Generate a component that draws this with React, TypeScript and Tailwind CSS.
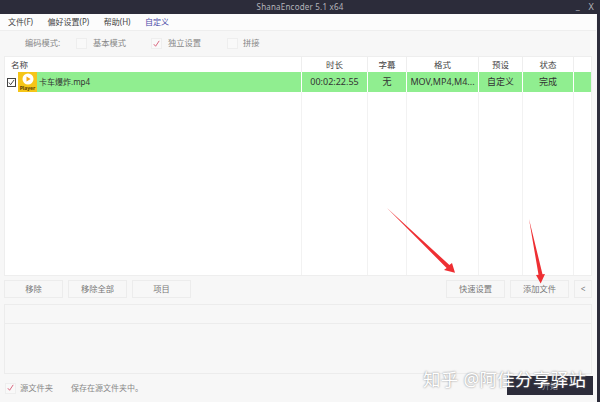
const cjk = { fontFamily: '"Noto Sans", "Noto Sans CJK SC", sans-serif' };

interface Column {
  label: string;
  cell: string;
  width: string;
}

const columns: Column[] = [
  { label: '时长', cell: '00:02:22.55', width: 'w-[66px]' },
  { label: '字幕', cell: '无', width: 'w-[39px]' },
  { label: '格式', cell: 'MOV,MP4,M4...', width: 'w-[72px]' },
  { label: '预设', cell: '自定义', width: 'w-[44px]' },
  { label: '状态', cell: '完成', width: 'w-[51px]' },
  { label: '', cell: '', width: 'w-[18px]' },
];

const Check = ({ checked }: { checked?: boolean }) => (
  <span className="flex h-[11px] w-[11px] items-center justify-center border border-[#eeeeee] bg-[#f9f9f9]">
    {checked && (
      <svg viewBox="0 0 10 10" className="h-[10px] w-[10px]" fill="none" stroke="#d9677f" strokeWidth="1.1">
        <path d="M2 5.2 L4 7.5 L8 1.5" />
      </svg>
    )}
  </span>
);

const Btn = ({ children, width }: { children: React.ReactNode; width: string }) => (
  <button className={`flex h-[18px] items-center justify-center border border-[#ececec] bg-[#f7f7f7] text-[8.25px] text-[#777777] ${width}`}>
    {children}
  </button>
);

const PlayerIcon = () => (
  <div className="flex h-[20px] w-[19px] shrink-0 flex-col items-center bg-[#f5c518]">
    <svg viewBox="0 0 12 12" className="mt-[1px] h-[12px] w-[12px]">
      <circle cx="6" cy="6" r="5.5" fill="#fff" />
      <path d="M4.5 3.4 L8.6 6 L4.5 8.6 Z" fill="#f5a818" />
    </svg>
    <span className="text-[5px] leading-[6px] font-bold text-[#5a4208]">Player</span>
  </div>
);

export default function App() {
  return (
    <div className="relative flex h-[402px] w-[600px] flex-col overflow-hidden bg-[#f7f7f7]" style={cjk}>
      {/* Title bar */}
      <div className="relative flex h-[14px] items-center justify-center bg-[#2c2c3a] text-[8px] tracking-[0.2px] text-[#b5b5bb]">
        ShanaEncoder 5.1 x64
        <span className="absolute top-0 right-[20px] text-[9px] leading-[12px] text-[#b5b5bb]">_</span>
        <span className="absolute top-0 right-[6px] text-[9px] leading-[14px] text-[#b5b5bb]">X</span>
      </div>

      <div className="flex flex-1 flex-col pr-[4px]">
        {/* Menu */}
        <div className="flex h-[17px] items-center gap-[14.6px] border-b border-[#eeeeee] bg-[#fcfcfc] pl-[8px] text-[8px] text-[#444444]">
          <span>文件(F)</span>
          <span>偏好设置(P)</span>
          <span>帮助(H)</span>
          <span className="text-[#4a4aa8]">自定义</span>
        </div>

        {/* Encoding mode */}
        <div className="flex h-[25px] items-center pl-[25px] text-[8.25px] text-[#888888]">
          <span className="w-[37px]">编码模式:</span>
          <span className="ml-[14px]"><Check /></span>
          <span className="ml-[6px] w-[33px]">基本模式</span>
          <span className="ml-[25px]"><Check checked /></span>
          <span className="ml-[6px] w-[33px]">独立设置</span>
          <span className="ml-[26px]"><Check /></span>
          <span className="ml-[5px]">拼接</span>
        </div>

        {/* File table */}
        <div className="ml-[4px] flex h-[220px] w-[588px] flex-col border border-[#eeeeee] bg-white">
          <div className="flex h-[15px] text-[8.5px] text-[#444444]">
            <div className="flex-1 pl-[6px] leading-[15px]">名称</div>
            {columns.map((col) => (
              <div key={col.width + col.label} className={`border-l border-[#eeeeee] text-center leading-[15px] ${col.width}`}>
                {col.label}
              </div>
            ))}
          </div>
          <div className="flex h-[20px] text-[8.5px] text-[#333333]">
            <div className="flex flex-1 items-center">
              <span className="ml-[2px] flex h-[9px] w-[9px] shrink-0 items-center justify-center border border-[#444444] bg-white">
                <svg viewBox="0 0 8 8" className="h-[7px] w-[7px]" fill="none" stroke="#333333" strokeWidth="1">
                  <path d="M1 4 L3 6.5 L7 1" />
                </svg>
              </span>
              <span className="ml-[2px]"><PlayerIcon /></span>
              <div className="flex h-full flex-1 items-center bg-[#90ee90] pl-[2px] text-[8px]">卡车爆炸.mp4</div>
            </div>
            {columns.map((col) => (
              <div key={col.width + col.cell} className={`flex items-center justify-center border-l border-white bg-[#90ee90] text-[9px] ${col.width}`}>
                {col.cell}
              </div>
            ))}
          </div>
          <div className="flex flex-1">
            <div className="flex-1" />
            {columns.map((col) => (
              <div key={col.width + 'body'} className={`border-l border-[#f2f2f2] ${col.width}`} />
            ))}
          </div>
        </div>

        {/* Buttons */}
        <div className="mt-[4px] ml-[4px] flex w-[588px] items-center">
          <div className="flex gap-[5px]">
            <Btn width="w-[59px]">移除</Btn>
            <Btn width="w-[59px]">移除全部</Btn>
            <Btn width="w-[59px]">项目</Btn>
          </div>
          <div className="ml-auto flex gap-[5px]">
            <Btn width="w-[59px]">快速设置</Btn>
            <Btn width="w-[59px]">添加文件</Btn>
            <Btn width="w-[18px]">&lt;</Btn>
          </div>
        </div>

        {/* Log panel */}
        <div className="mt-[6px] ml-[4px] flex h-[70px] w-[588px] flex-col border border-[#ececec]">
          <div className="h-[19px] border-b border-[#ececec]" />
        </div>

        {/* Footer */}
        <div className="ml-[5px] flex flex-1 items-center text-[8px] text-[#888888]">
          <Check checked />
          <span className="ml-[4px] w-[33px] text-[8.25px]">源文件夹</span>
          <span className="ml-[18px]">保存在源文件夹中。</span>
          <button className="mr-[3px] mb-[5px] ml-auto flex h-[19px] w-[86px] items-center justify-center bg-[#2c2c3a] text-[8px] text-[#9a9aa2]">
            开始
          </button>
        </div>
      </div>

      {/* Window edge */}
      <div className="absolute top-0 right-0 bottom-0 w-[3px] bg-[#2c2c3a]" />

      {/* Red annotation arrows */}
      <svg className="pointer-events-none absolute inset-0" width="600" height="402" viewBox="0 0 600 402">
        <path d="M387 208 L449.4 265 L452 263 L455 272.7 L444 270 L446.6 268 Z" fill="#ee2f33" />
        <path d="M529 219 L542.5 274.2 L545 274 L540.7 283.5 L536 275 L538.5 274.7 Z" fill="#ee2f33" />
      </svg>

      {/* Watermark */}
      <div className="absolute top-[368px] left-[423px] text-[17.5px] leading-[22px] tracking-[0.3px] whitespace-nowrap text-white [text-shadow:0_0_2px_#777777]">
        知乎 @阿佳分享驿站
      </div>
    </div>
  );
}
